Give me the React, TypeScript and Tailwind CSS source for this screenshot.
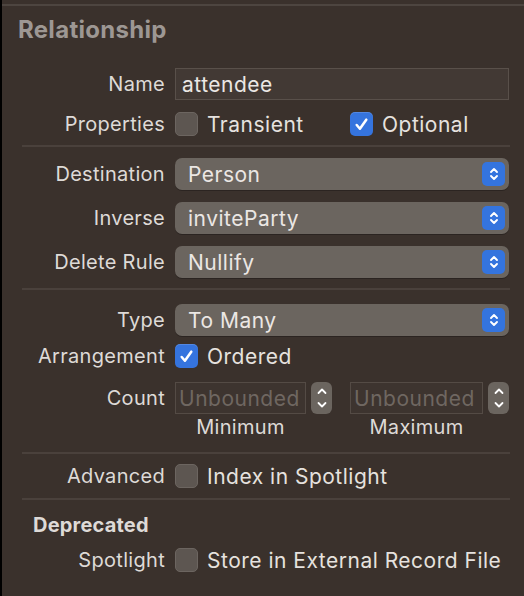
import React from "react";

const font = { fontFamily: "Inter, 'Noto Sans', 'Liberation Sans', sans-serif" };

// text styles for the left-hand labels and the control values
const labelText = "text-[20px] leading-none tracking-[0.3px] text-[#dedad7]";
const valueText = "text-[21px] leading-none tracking-[0.5px]";

function Chevrons({ className = "" }: { className?: string }) {
  return (
    <svg viewBox="0 0 12 16" className={className} fill="none" stroke="white" strokeWidth={1.9} strokeLinecap="round" strokeLinejoin="round">
      <path d="M3 6 L6 3 L9 6" />
      <path d="M3 10 L6 13 L9 10" />
    </svg>
  );
}

function Checkbox({ checked }: { checked?: boolean }) {
  if (checked) {
    return (
      <div className="flex h-[24px] w-[23px] shrink-0 items-center justify-center rounded-[5px] bg-[#3574de] shadow-[inset_0_1px_0_rgba(255,255,255,0.15)]">
        <svg viewBox="0 0 16 16" className="h-[17px] w-[17px]" fill="none" stroke="white" strokeWidth={2.4} strokeLinecap="round" strokeLinejoin="round">
          <path d="M3.5 8.5 L6.5 12 L12.5 3.5" />
        </svg>
      </div>
    );
  }
  return <div className="h-[24px] w-[23px] shrink-0 rounded-[5px] border border-[#6c6560] bg-[#5d5651]" />;
}

function Row({ label, children, className = "" }: { label: string; children: React.ReactNode; className?: string }) {
  return (
    <div className={`flex items-center ${className}`}>
      <div className={`w-[144px] shrink-0 text-right ${labelText}`}>{label}</div>
      <div className="ml-[10px] flex min-w-0 flex-1 items-center">{children}</div>
    </div>
  );
}

function Popup({ value }: { value: string }) {
  return (
    <div className="flex h-[32px] w-[334px] items-center justify-between rounded-[7px] bg-[#6b655f] pl-[13px] pr-[4px] shadow-[0_1px_0_rgba(0,0,0,0.25)]">
      <span className={`${valueText} text-[#ebe7e4]`}>{value}</span>
      <div className="flex h-[24px] w-[23px] items-center justify-center rounded-[5px] bg-[#3474de]">
        <Chevrons className="h-[16px] w-[12px]" />
      </div>
    </div>
  );
}

function Check({ checked, label }: { checked?: boolean; label: string }) {
  return (
    <div className="flex items-center gap-[9px]">
      <Checkbox checked={checked} />
      <span className={`${valueText} text-[#e6e2df]`}>{label}</span>
    </div>
  );
}

function Separator({ className = "" }: { className?: string }) {
  return <div className={`h-[2px] bg-[#4a413c] ${className}`} />;
}

function CountField({ caption, width }: { caption: string; width: string }) {
  return (
    <div className="flex flex-col">
      <div className="flex items-center gap-[5px]">
        <div className={`flex h-[32px] ${width} items-center overflow-hidden border border-[#544b45] bg-[#3d342f] pl-[3px]`}>
          <span className={`${valueText} whitespace-nowrap text-[#6f6761]`}>Unbounded</span>
        </div>
        <div className="flex h-[32px] w-[21px] flex-col items-center justify-center rounded-[6px] bg-[#6b655f]">
          <svg viewBox="0 0 12 28" className="h-[28px] w-[12px]" fill="none" stroke="white" strokeWidth={1.8} strokeLinecap="round" strokeLinejoin="round">
            <path d="M2.5 9 L6 5.5 L9.5 9" />
            <path d="M2.5 19 L6 22.5 L9.5 19" />
          </svg>
        </div>
      </div>
      <div className={`${width} h-[26px] text-center text-[20px] leading-[26px] tracking-[0.3px] text-[#dedad7]`}>{caption}</div>
    </div>
  );
}

export default function App() {
  return (
    <div style={font} className="flex h-[596px] w-[524px] overflow-hidden bg-black">
      <div className="w-[1px] bg-[#2b2724]" />
      <div className="ml-[2px] flex flex-1 flex-col border-r-2 border-[#5e5854] bg-[#3a312c]">
        <div className="mt-[4px] h-[2px] bg-[#4d4540]" />

        <div className="flex flex-col px-[19px]">
          <div className="ml-[-3px] mt-[9px] h-[30px] text-[24px] font-bold leading-[30px] tracking-[0.3px] text-[#9d9793]">Relationship</div>

          <Row label="Name" className="mt-[23px] h-[32px]">
            <div className="flex h-[32px] w-[334px] items-center border border-[#59504a] bg-[#423934] pl-[6px]">
              <span className={`${valueText} text-[#ebe7e4]`}>attendee</span>
            </div>
          </Row>

          <Row label="Properties" className="mt-[12px] h-[24px]">
            <div className="w-[175px]">
              <Check label="Transient" />
            </div>
            <Check checked label="Optional" />
          </Row>

          <Separator className="ml-[1px] mr-[-1px] mt-[9px]" />

          <Row label="Destination" className="mt-[11px] h-[32px]">
            <Popup value="Person" />
          </Row>
          <Row label="Inverse" className="mt-[12px] h-[32px]">
            <Popup value="inviteParty" />
          </Row>
          <Row label="Delete Rule" className="mt-[12px] h-[32px]">
            <Popup value="Nullify" />
          </Row>

          <Separator className="ml-[1px] mr-[-1px] mt-[10px]" />

          <Row label="Type" className="mt-[14px] h-[32px]">
            <Popup value="To Many" />
          </Row>
          <Row label="Arrangement" className="mt-[8px] h-[24px]">
            <Check checked label="Ordered" />
          </Row>

          <div className="mt-[14px] flex items-start">
            <div className={`flex h-[32px] w-[144px] shrink-0 items-center justify-end ${labelText}`}>Count</div>
            <div className="ml-[10px] flex gap-[18px]">
              <CountField caption="Minimum" width="w-[131px]" />
              <CountField caption="Maximum" width="w-[133px]" />
            </div>
          </div>

          <Separator className="ml-[1px] mr-[-1px] mt-[12px]" />

          <Row label="Advanced" className="mt-[10px] h-[24px]">
            <Check label="Index in Spotlight" />
          </Row>

          <Separator className="ml-[1px] mr-[-1px] mt-[10px]" />

          <div className="ml-[12px] mt-[13px] h-[24px] text-[20px] font-bold leading-[24px] tracking-[0.2px] text-[#dedad7]">Deprecated</div>

          <Row label="Spotlight" className="mt-[11px] h-[24px]">
            <Check label="Store in External Record File" />
          </Row>
        </div>
      </div>
    </div>
  );
}
